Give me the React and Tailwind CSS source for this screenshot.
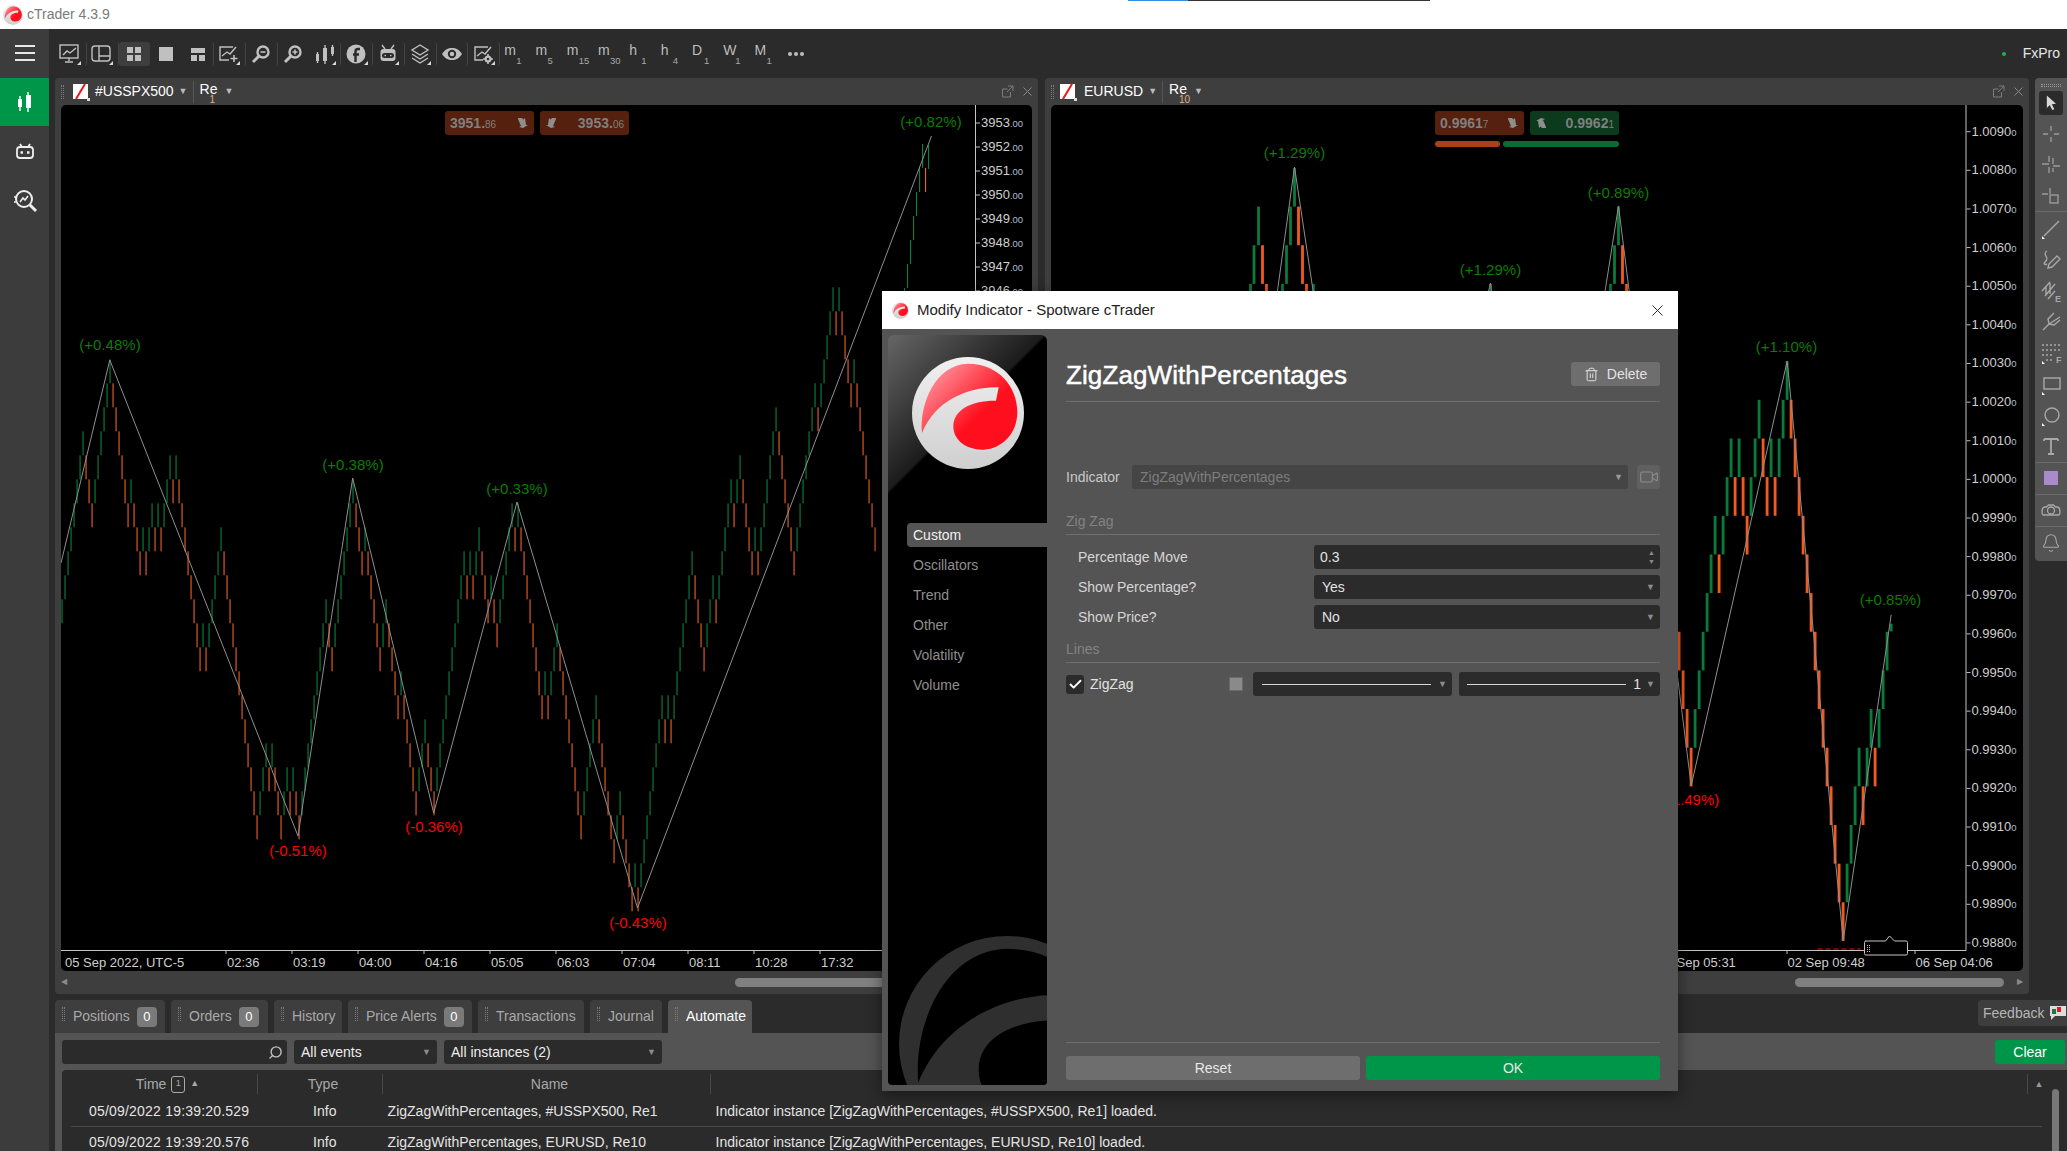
import React from "react";
import { Bell, Check, Search, Trash2, Video, X } from "lucide-react";

const GREEN = "#0d8040";
const ORANGE = "#ee6129";

// turns a string of renko moves (u/d) into bars
const walk = (startLevel, moves, firstUp) => {
  let level = startLevel;
  const bars = [{ i: 0, level, up: firstUp }];
  moves.split("").forEach((m, idx) => {
    level += m === "u" ? -1 : 1;
    bars.push({ i: idx + 1, level, up: m === "u" });
  });
  return bars;
};

const leftMoves = [
  "uuuuuuu", "ddd", "uuuuuu", "dddddd", "u", "ddd", "u", "d", "uu", "d", "u", "d", "uuu", "d", "u",
  "dddddddd", "u", "d", "uuuuu", "dddddddddddd", "uuu", "d", "u", "ddd", "uu", "d", "u", "dd",
  "uuuuuuuuu", "dd", "uu", "uuuuu", "ddd", "u", "ddddd", "uu", "dddd", "u", "ddddd", "uuu", "ddd",
  "uuuuuuuuuu", "d", "u", "d", "uu", "ddd", "u", "dd", "uuuuu", "d", "u", "dddddddd", "u", "d", "uuu",
  "dddddddd", "uuu", "uu", "dddddd", "uu", "dddd", "u", "d", "uuuuuuuu", "d", "u", "d", "uuuuuuu",
  "dddd", "uuu", "d", "uuuuu", "d", "uu", "dddd", "u", "d", "uuuuuu", "dddddd", "uuuuuuu", "d",
  "uuuuu", "d", "u", "dddd", "u", "ddddddd",
].join("");
const leftBars = walk(10, leftMoves, true);
const leftTip = [
  [904, 288, 1], [907, 264, 1], [910, 240, 1], [913, 216, 1], [916, 192, 1], [919, 168, 1],
  [922, 144, 1], [925, 168, 0], [928, 145, 1],
];

const rightMoves = "ddduuuuuuduuududduuuddudu" + "uu" + "dddddddddddddd" + "uuuuduuduuu";
const rightBars = walk(7, rightMoves, false);
const rightTop = [
  [1250, -2, 1], [1253.5, -3, 1], [1258, -4, 1], [1262, -3, 0], [1266, -2, 0], [1282, -2, 1], [1286, -3, 1],
  [1290, -4, 1], [1294, -5, 1], [1298, -4, 0], [1302, -3, 0], [1306, -2, 0], [1313, -2, 1], [1490, -2, 1],
  [1610, -2, 1], [1614, -3, 1], [1618, -4, 1], [1622, -3, 0], [1626, -2, 0],
];
const renkoY = (n) => 361.2 + 38.65 * n;

const Logo = ({ size, rim = "url(#logoRim)", core = "url(#logoRed)" }) => (
  <svg width={size} height={size} viewBox="0 0 336 336" className="shrink-0">
    <circle cx="168" cy="168" r="168" fill={rim} />
    <path
      d="M30 228C22 140 70 22 168 20C260 20 316 90 316 165C316 230 270 275 215 278C165 280 122 250 124 205C126 160 175 130 252 131L260 91C170 88 70 130 30 228Z"
      fill={core}
    />
  </svg>
);

const LogoDefs = () => (
  <svg width="0" height="0" className="absolute">
    <defs>
      <linearGradient id="logoRim" x1="0" y1="0" x2="0" y2="1">
        <stop offset="0" stopColor="#f0f0f0" />
        <stop offset="1" stopColor="#cfcfcf" />
      </linearGradient>
      <linearGradient id="logoRed" x1="0.1" y1="0.05" x2="0.65" y2="0.55">
        <stop offset="0" stopColor="#ff9aa2" />
        <stop offset="1" stopColor="#ff0f1e" />
      </linearGradient>
    </defs>
  </svg>
);

const Caret = ({ className = "text-[#bbbbbb]" }) => <span className={`text-[9px] leading-none ${className}`}>▼</span>;

const Corner = () => <path d="M23 23h-4l4-4z" fill="#d8d8d8" stroke="none" />;

const I = ({ children, size = 24, color = "#c0c0c0" }) => (
  <svg width={size} height={size} viewBox="0 0 24 24" fill="none" stroke={color} strokeWidth="1.4" className="shrink-0">
    {children}
  </svg>
);

const toolbarIcons = [
  <I key="1">
    <rect x="2" y="3" width="18" height="13" />
    <path d="M5 13l4-4 3 2 6-5M11 16v3M7 20h8" />
    <Corner />
  </I>,
  <I key="2">
    <rect x="2" y="4" width="18" height="15" rx="3" />
    <path d="M9 4v15M9 14h11" />
    <Corner />
  </I>,
  <I key="3">
    <path d="M5 5h6v6H5zM13 5h6v6h-6zM5 13h6v6H5zM13 13h6v6h-6z" fill="#c0c0c0" stroke="none" />
  </I>,
  <I key="4">
    <rect x="5" y="5" width="14" height="14" fill="#c0c0c0" stroke="none" />
  </I>,
  <I key="5">
    <path d="M5 6h14v5H5zM5 13h6v6H5zM13 13h6v6h-6z" fill="#c0c0c0" stroke="none" />
  </I>,
  <I key="6">
    <path d="M16 5H3v13h9M5 14l5-4 3 2 6-7" />
    <path d="M17 13v7M13.500 16.500h7" strokeWidth="1.600" />
    <Corner />
  </I>,
  <I key="7">
    <circle cx="14" cy="10" r="5.500" strokeWidth="2.400" />
    <path d="M10 14l-6 6" strokeWidth="3" />
    <path d="M11.500 10h5" strokeWidth="1.600" />
  </I>,
  <I key="8">
    <circle cx="14" cy="10" r="5.500" strokeWidth="2.400" />
    <path d="M10 14l-6 6" strokeWidth="3" />
    <path d="M11.500 10h5M14 7.500v5" strokeWidth="1.600" />
  </I>,
  <I key="9">
    <path d="M3 12h3v7H3zM10 6h4v13h-4zM18 5h3v7h-3z" fill="#c0c0c0" stroke="none" />
    <path d="M4.500 10v11M12 3v19M19.500 3v11" />
    <Corner />
  </I>,
  <I key="10">
    <circle cx="11" cy="12" r="9.500" fill="#c0c0c0" stroke="none" />
    <path d="M15 7h-2c-1.500 0-2.500 1-2.500 2.500V20M8 12.500h6" stroke="#2b2b2b" strokeWidth="2.400" />
    <Corner />
  </I>,
  <I key="11">
    <path d="M6 3l3 4M18 3l-3 4" />
    <rect x="3.500" y="7" width="15" height="12" rx="3" transform="translate(1)" fill="#c0c0c0" stroke="none" />
    <rect x="6" y="11" width="12" height="5" rx="2.500" fill="#2b2b2b" stroke="none" />
    <path d="M8.500 13.500h1.500M14 13.500h1.500" stroke="#c0c0c0" />
    <Corner />
  </I>,
  <I key="12">
    <path d="M12 3l8 5-8 5-8-5zM4 12l8 5 8-5M4 16l8 5 8-5" />
    <Corner />
  </I>,
  <I key="13">
    <path d="M2 12c3-4.500 6-6 10-6s7 1.500 10 6c-3 4.500-6 6-10 6s-7-1.500-10-6z" fill="#c0c0c0" stroke="none" />
    <circle cx="12" cy="12" r="3.200" stroke="#2b2b2b" strokeWidth="2" />
  </I>,
  <I key="14">
    <path d="M16 5H3v13h8M5 14l5-4 3 2 6-7" />
    <circle cx="16" cy="17" r="3.500" fill="#c0c0c0" stroke="none" />
    <circle cx="16" cy="17" r="1.300" fill="#2b2b2b" stroke="none" />
    <path d="M16 12v2M16 20v2M11 17h2M19 17h2" strokeWidth="1.600" />
    <Corner />
  </I>,
];

const timeframes = [
  ["m", "1"], ["m", "5"], ["m", "15"], ["m", "30"], ["h", "1"], ["h", "4"], ["D", "1"], ["W", "1"], ["M", "1"],
];

const drawTools = [
  <I key="a" color="#dddddd">
    <path d="M7 3l11 10-5 .5 3 6-2.500 1-3-6L7 18z" fill="#d8d8d8" stroke="none" />
  </I>,
  <I key="b" color="#9a9a9a">
    <path d="M12 4v5M12 15v5M4 12h5M15 12h5" />
  </I>,
  <I key="c" color="#9a9a9a">
    <path d="M10 3v6M14 5v6M3 11h7M14 13h7M10 14v6M14 15v4" />
  </I>,
  <I key="d" color="#9a9a9a">
    <path d="M11 4v6M3 10h6" />
    <rect x="11" y="11" width="8" height="8" />
  </I>,
  <I key="e" color="#a8a8a8">
    <path d="M20 4L5 19" />
    <path d="M3 22v-3l3 3z" fill="#fff" stroke="none" />
  </I>,
  <I key="f" color="#a8a8a8">
    <path d="M8 3C2 7 12 9 6 14c-2 2 0 3 2 2M9 20l1-4 8-8 3 3-8 8z" />
  </I>,
  <I key="g" color="#a8a8a8">
    <path d="M3 12l8-9M6 17l10-12M9 20l7-8M7 7v9M11 4v11" />
    <text x="16" y="23" fontSize="9" fontWeight="700" fill="#a8a8a8" stroke="none">E</text>
  </I>,
  <I key="h" color="#a8a8a8">
    <path d="M4 20l6-6M10 14l11-7M10 14l5 1 6-5M10 14l-1-5 6-6" />
  </I>,
  <I key="i" color="#a8a8a8">
    <path d="M3 4h18M3 9h18M3 14h12M7 19h8" strokeDasharray="2 2" />
    <path d="M3 23v-3l3 3z" fill="#fff" stroke="none" />
    <text x="17" y="22" fontSize="9" fontWeight="700" fill="#a8a8a8" stroke="none">F</text>
  </I>,
  <I key="j" color="#a8a8a8">
    <rect x="5" y="6" width="16" height="11" />
    <path d="M3 23v-3l3 3z" fill="#fff" stroke="none" />
  </I>,
  <I key="k" color="#a8a8a8">
    <circle cx="13" cy="12" r="7" />
    <path d="M3 23v-3l3 3z" fill="#fff" stroke="none" />
  </I>,
  <I key="l" color="#a8a8a8">
    <path d="M5 5h14M12 5v15M9 20h6M5 5v2M19 5v2" strokeWidth="1.800" />
  </I>,
];

const tabs = [
  { label: "Positions", badge: "0", w: "w-[110px]" },
  { label: "Orders", badge: "0", w: "w-[97px]" },
  { label: "History", w: "w-[68px]" },
  { label: "Price Alerts", badge: "0", w: "w-[124px]" },
  { label: "Transactions", w: "w-[106px]" },
  { label: "Journal", w: "w-[72px]" },
  { label: "Automate", w: "w-[84px]", active: true },
];

const Grip = ({ className = "" }) => (
  <span className={`w-[3px] h-[14px] shrink-0 border-x border-dotted border-[#7a7a7a] ${className}`} />
);

const PriceChip = ({ className, children }) => (
  <div className={`h-[24px] w-[89px] rounded-[3px] flex items-center justify-between px-[5px] text-[#7f7f7f] font-bold text-[14px] ${className}`}>
    {children}
  </div>
);

const ChipArrow = ({ flip, up }) => (
  <svg width="12" height="12" viewBox="0 0 12 12" className={`${flip ? "-scale-x-100" : ""} ${up ? "-scale-y-100" : ""}`}>
    <path d="M1 1h4l1.500 1.500 1.500-1.500 1 7 2 0-5 3-4-1 2-1-3-7z" fill="#8e8e8e" />
  </svg>
);

const PanelHeader = ({ symbol, period, leftPad, gap }) => (
  <div className="h-[27px] shrink-0 flex items-center">
    <Grip />
    <div className={`relative h-[15px] w-[15px] bg-white ${leftPad}`}>
      <svg viewBox="0 0 15 15" className="w-full h-full">
        <path d="M3 15L12 0" stroke="#e8161e" strokeWidth="2" />
      </svg>
      <span className="absolute -right-[2px] -bottom-[2px] w-[3px] h-[3px] bg-[#dddddd]" />
    </div>
    <span className={`text-[14px] text-white ${gap}`}>{symbol}</span>
    <Caret className="text-[#bbbbbb] ml-[5px]" />
    <span className="ml-[5px] h-[22px] border-l border-[#555555]" />
    <span className="ml-[6px] text-[14px] text-white -mt-[4px] relative">
      Re
      <span className="absolute left-[10px] top-[13px] text-[10px] text-[#e0b080]">{period}</span>
    </span>
    <Caret className="text-[#bbbbbb] ml-[7px]" />
    <div className="ml-auto flex items-center gap-[6px] -mr-[3px]">
      <svg width="13" height="13" viewBox="0 0 13 13" fill="none" stroke="#7c7c7c">
        <path d="M9.500 7v5h-8V4h5M7 1h5v5M12 1L6 7" />
      </svg>
      <X size={15} color="#888888" strokeWidth={1.6} />
    </div>
  </div>
);

const PriceTick = ({ x, y, main, small }) => (
  <>
    <line x1={x} x2={x + 4} y1={y} y2={y} stroke="#bdbdbd" />
    <text x={x + 5} y={y + 4} fontSize="13" fill="#cfcfcf">
      {main}
      <tspan fontSize="9.500" fill="#a9bdd4">{small}</tspan>
    </text>
  </>
);

const Pct = ({ x, y, children, red }) => (
  <text x={x} y={y + 5} textAnchor="middle" fontSize="15" fill={red ? "#ff0000" : "#0a7d00"}>
    {children}
  </text>
);

const leftTimes = ["02:36", "03:19", "04:00", "04:16", "05:05", "06:03", "07:04", "08:11", "10:28", "17:32"];

const LeftChart = () => (
  <svg viewBox="61 105 971 866" className="block w-full h-full">
    {leftBars.map((b) => (
      <rect
        key={b.i}
        x={61.5 + 3 * b.i}
        y={359.3 + 24 * b.level}
        width="1.100"
        height="24"
        fill={b.up ? GREEN : ORANGE}
      />
    ))}
    {leftTip.map(([x, y, up]) => (
      <rect key={x} x={x} y={y} width="1.100" height="24" fill={up ? GREEN : ORANGE} />
    ))}
    <polyline
      points="61,563 109.800,360 298,836 352.700,478 433.700,813 517,502 637.500,908 931.500,136"
      fill="none"
      stroke="#8f8f8f"
    />
    <Pct x={110} y={345}>(+0.48%)</Pct>
    <Pct x={353} y={465}>(+0.38%)</Pct>
    <Pct x={517} y={489}>(+0.33%)</Pct>
    <Pct x={931} y={122}>(+0.82%)</Pct>
    <Pct x={298} y={851} red>(-0.51%)</Pct>
    <Pct x={434} y={827} red>(-0.36%)</Pct>
    <Pct x={638} y={923} red>(-0.43%)</Pct>
    <path d="M975.500 105V950.500H61" fill="none" stroke="#c4c4c4" />
    {[3953, 3952, 3951, 3950, 3949, 3948, 3947, 3946].map((v, i) => (
      <PriceTick key={v} x={976} y={123 + i * 24} main={v} small=".00" />
    ))}
    <text x={65} y={967} fontSize="13" fill="#cfcfcf">05 Sep 2022, UTC-5</text>
    {leftTimes.map((t, i) => (
      <g key={t}>
        <line x1={226 + i * 66} x2={226 + i * 66} y1={950} y2={954} stroke="#bdbdbd" />
        <text x={227 + i * 66} y={967} fontSize="13" fill="#cfcfcf">{t}</text>
      </g>
    ))}
  </svg>
);

const rightPrices = Array.from({ length: 22 }, (_, i) => (1.009 - i * 0.001).toFixed(4));

const RightChart = () => (
  <svg viewBox="1051 105 971 866" className="block w-full h-full">
    {rightBars.map((b) => (
      <rect
        key={b.i}
        x={1677.2 + 4 * b.i}
        y={renkoY(b.level)}
        width="2.800"
        height="38.650"
        fill={b.up ? "#0b7a3a" : "#f4591f"}
      />
    ))}
    <rect x="1889.300" y="623.700" width="2.800" height="7.700" fill="#0b7a3a" />
    {rightTop.map(([x, n, up]) => (
      <rect key={x} x={x - 1.4} y={renkoY(n)} width="2.800" height="38.650" fill={up ? "#0b7a3a" : "#f4591f"} />
    ))}
    <polyline
      points="1240,560 1294,167 1380,740 1490,283 1540,700 1618,206 1690.700,785.700 1786.700,361 1842.700,940.600 1890.700,614.700"
      fill="none"
      stroke="#8f8f8f"
    />
    <Pct x={1294} y={153}>(+1.29%)</Pct>
    <Pct x={1618} y={193}>(+0.89%)</Pct>
    <Pct x={1490} y={270}>(+1.29%)</Pct>
    <Pct x={1786} y={347}>(+1.10%)</Pct>
    <Pct x={1890} y={600}>(+0.85%)</Pct>
    <Pct x={1690} y={800} red>(-1.49%)</Pct>
    <line x1="1817" x2="1860" y1="949" y2="949" stroke="#ff0000" strokeDasharray="5 3" />
    <path d="M1965.500 105V950.500H1051" fill="none" stroke="#c4c4c4" />
    {rightPrices.map((v, i) => (
      <PriceTick key={v} x={1966} y={131.700 + i * 38.630} main={v} small="0" />
    ))}
    <line x1="1786.500" x2="1786.500" y1="950" y2="954" stroke="#bdbdbd" />
    <line x1="1914.500" x2="1914.500" y1="950" y2="954" stroke="#bdbdbd" />
    <text x={1658} y={967} fontSize="13" fill="#cfcfcf">01 Sep 05:31</text>
    <text x={1787} y={967} fontSize="13" fill="#cfcfcf">02 Sep 09:48</text>
    <text x={1915} y={967} fontSize="13" fill="#cfcfcf">06 Sep 04:06</text>
    <path
      d="M1865 941h20l4-5 5 5h11.500a1.500 1.500 0 0 1 1.500 1.500v11a1.500 1.500 0 0 1-1.500 1.500h-40a1.500 1.500 0 0 1-1.500-1.500v-11a1.500 1.500 0 0 1 1.500-1.500z"
      fill="#000"
      stroke="#c4c4c4"
    />
    <path d="M1867 945v7M1869 945v7" stroke="#c4c4c4" strokeDasharray="1 1" />
  </svg>
);

const DialogRow = ({ label, children }) => (
  <div className="flex items-center h-[24px] pl-[12px]">
    <span className="w-[236px] shrink-0 text-[14px] text-[#d6d6d6]">{label}</span>
    {children}
  </div>
);

const DarkSelect = ({ value, pl = "pl-[8px]" }) => (
  <div className={`flex-1 h-full bg-[#2b2b2b] rounded-[3px] flex items-center justify-between pr-[5px] ${pl} text-[14px] text-[#e2e2e2]`}>
    {value}
    <Caret className="text-[#8c8c8c]" />
  </div>
);

const SectionTitle = ({ className, children }) => (
  <div className={`flex items-end pb-[2px] border-b border-[#6e6e6e] text-[14px] text-[#838383] ${className}`}>
    {children}
  </div>
);

const Dialog = () => (
  <div className="absolute left-[882px] top-[291px] w-[796px] h-[800px] flex flex-col bg-[#545454] shadow-[0_4px_14px_rgba(0,0,0,0.45)]">
    <div className="h-[38px] shrink-0 bg-white flex items-center pl-[10px] pr-[11px] text-[15px] text-[#222222]">
      <Logo size={17} />
      <span className="ml-[8px] pt-[1px]">Modify Indicator - Spotware cTrader</span>
      <X size={19} strokeWidth={1.200} color="#222222" className="ml-auto" />
    </div>
    <div className="flex-1 flex pt-[6px] pb-[6px] pl-[6px]">
      <div className="relative w-[159px] overflow-hidden rounded-t-[6px] rounded-b-[4px] bg-[linear-gradient(135deg,#666666_0,#1c1c1c_110px,#000000_113px)] flex flex-col">
        <div className="mt-[22px] ml-[24px]">
          <Logo size={112} />
        </div>
        <div className="mt-[54px] ml-[19px] flex flex-col gap-[6px] text-[14px] text-[#8f8f8f]">
          <div className="h-[24px] pl-[6px] flex items-center bg-[#545454] rounded-l-[4px] text-[#f0f0f0]">Custom</div>
          {["Oscillators", "Trend", "Other", "Volatility", "Volume"].map((n) => (
            <div key={n} className="h-[24px] pl-[6px] flex items-center">{n}</div>
          ))}
        </div>
        <div className="absolute left-[11px] top-[601px]">
          <Logo size={216} rim="#2f2f2f" core="#000000" />
        </div>
      </div>
      <div className="ml-[19px] w-[594px] pb-[5px] flex flex-col">
        <div className="h-[67px] shrink-0 flex items-end justify-between pb-[15px] border-b border-[#6e6e6e]">
          <span className="text-[26px] leading-[32px] text-white tracking-[0.100px] -mb-[5px] [-webkit-text-stroke:0.500px_white]">ZigZagWithPercentages</span>
          <div className="h-[24px] w-[89px] rounded-[3px] bg-[#6e6e6e] flex items-center justify-center gap-[8px] text-[14px] text-[#e2e2e2]">
            <Trash2 size={15} strokeWidth={1.600} />
            <span className="pt-[1px]">Delete</span>
          </div>
        </div>
        <div className="mt-[63px] h-[24px] flex items-center">
          <span className="w-[66px] text-[14px] text-[#c8c8c8]">Indicator</span>
          <div className="w-[496px] h-full bg-[#454545] rounded-[3px] flex items-center justify-between pl-[8px] pr-[5px] text-[14px] text-[#7e7e7e]">
            ZigZagWithPercentages
            <Caret className="text-[#9a9a9a]" />
          </div>
          <div className="ml-[9px] w-[23px] h-full bg-[#606060] rounded-[3px] flex items-center justify-center">
            <Video size={20} strokeWidth={1.300} color="#8c8c8c" />
          </div>
        </div>
        <SectionTitle className="h-[46px]">Zig Zag</SectionTitle>
        <div className="mt-[10px] flex flex-col gap-[6px]">
          <DialogRow label="Percentage Move">
            <div className="flex-1 h-full bg-[#2b2b2b] rounded-[3px] flex items-center justify-between pl-[6px] pr-[5px] text-[14px] text-[#e2e2e2]">
              0.3
              <span className="flex flex-col gap-[1px] text-[#8c8c8c]">
                <span className="text-[7px] leading-[8px]">▲</span>
                <span className="text-[7px] leading-[8px]">▼</span>
              </span>
            </div>
          </DialogRow>
          <DialogRow label="Show Percentage?"><DarkSelect value="Yes" /></DialogRow>
          <DialogRow label="Show Price?"><DarkSelect value="No" /></DialogRow>
        </div>
        <SectionTitle className="h-[34px]">Lines</SectionTitle>
        <div className="mt-[9px] h-[24px] flex items-center">
          <div className="w-[18px] h-[19px] bg-[#2b2b2b] rounded-[3px] flex items-center justify-center">
            <Check size={15} strokeWidth={3} color="#ffffff" />
          </div>
          <span className="ml-[6px] w-[139px] text-[14px] text-[#e2e2e2]">ZigZag</span>
          <span className="w-[14px] h-[14px] bg-[#8a8a8a] border border-[#6a6a6a]" />
          <div className="ml-[10px] w-[199px] h-full bg-[#2b2b2b] rounded-[3px] flex items-center pl-[9px] pr-[5px]">
            <span className="flex-1 border-t border-[#d8d8d8]" />
            <Caret className="ml-[7px] text-[#8c8c8c]" />
          </div>
          <div className="ml-[7px] w-[201px] h-full bg-[#2b2b2b] rounded-[3px] flex items-center pl-[8px] pr-[5px] text-[14px] text-[#e2e2e2]">
            <span className="flex-1 border-t border-[#d8d8d8]" />
            <span className="ml-[7px]">1</span>
            <Caret className="ml-[5px] text-[#8c8c8c]" />
          </div>
        </div>
        <div className="mt-auto border-t border-[#6e6e6e] pt-[13px] flex gap-[6px] text-[14px] text-[#e8e8e8]">
          <div className="w-[294px] h-[24px] rounded-[3px] bg-[#6e6e6e] flex items-center justify-center">Reset</div>
          <div className="w-[294px] h-[24px] rounded-[3px] bg-[#00964a] flex items-center justify-center">OK</div>
        </div>
      </div>
    </div>
  </div>
);

const App = () => (
  <div className="relative w-[2067px] h-[1151px] overflow-hidden flex flex-col bg-[#2b2b2b] [font-family:'Liberation_Sans',Arial,sans-serif]">
    <LogoDefs />
    {/* window title */}
    <div className="relative h-[29px] shrink-0 bg-white flex items-center pl-[3px] text-[14px] text-[#7a7a7a]">
      <Logo size={20} />
      <span className="ml-[4px]">cTrader 4.3.9</span>
      <span className="absolute left-[1128px] top-0 w-[60px] h-[1px] bg-[#2f8fe8]" />
      <span className="absolute left-[1188px] top-0 w-[242px] h-[1px] bg-[#333333]" />
    </div>

    <div className="flex-1 flex min-h-0">
      {/* left rail */}
      <div className="w-[49px] shrink-0 bg-[#3c3c3c] flex flex-col items-center">
        <div className="h-[49px] pb-[2px] w-full flex items-center justify-center">
          <svg width="22" height="18" viewBox="0 0 22 18" stroke="#e6e6e6" strokeWidth="2">
            <path d="M1 2h20M1 9h20M1 16h20" />
          </svg>
        </div>
        <div className="h-[48px] w-full bg-[#00964a] flex items-center justify-center">
          <svg width="24" height="24" viewBox="0 0 24 24" stroke="#ffffff" fill="#ffffff">
            <path d="M7 6v15M15 2v20" strokeWidth="1.400" />
            <rect x="5" y="9" width="4" height="8" stroke="none" />
            <rect x="13" y="5" width="5" height="13" stroke="none" />
          </svg>
        </div>
        <div className="mt-[13px] h-[24px]">
          <svg width="24" height="24" viewBox="0 0 24 24" fill="none" stroke="#eeeeee" strokeWidth="1.800">
            <path d="M7 5l2 3M17 5l-2 3" />
            <rect x="4" y="8" width="16" height="11" rx="3" />
            <path d="M7.500 13.500h2.500M14 13.500h2.500" strokeWidth="2.400" />
          </svg>
        </div>
        <div className="mt-[25px] h-[24px]">
          <svg width="26" height="26" viewBox="0 0 26 26" fill="none" stroke="#eeeeee" strokeWidth="2">
            <circle cx="12" cy="11" r="8" />
            <path d="M18 17l6 6" strokeWidth="3" />
            <path d="M8 14l3-4 2 2 3-4M2 9h3M2 14h2" strokeWidth="1.500" />
          </svg>
        </div>
      </div>

      <div className="flex-1 min-w-0 flex flex-col">
        {/* top toolbar */}
        <div className="h-[49px] shrink-0 flex items-center pl-[6px] pr-[7px]">
          {toolbarIcons.map((icon, i) => (
            <div
              key={i}
              className={`w-[31.800px] h-[24px] flex items-center justify-center rounded-[3px] ${i === 2 ? "bg-[#3e3e3e]" : ""} ${[0, 1, 4, 5, 6, 8, 9, 10, 11, 12, 13].includes(i) ? "border-r border-[#444444]" : ""}`}
            >
              {icon}
            </div>
          ))}
          <div className="flex ml-[4px]">
            {timeframes.map(([l, s], i) => (
              <div key={i} className="relative w-[31.300px] h-[24px] text-[14px] text-[#bdbdbd]">
                <span className="absolute left-0 -top-[2px]">{l}</span>
                <span className="absolute left-[12px] top-[12px] text-[9.500px] text-[#a8a8a8]">{s}</span>
              </div>
            ))}
          </div>
          <svg width="18" height="6" viewBox="0 0 18 6" className="ml-[1px]" fill="#bdbdbd">
            <circle cx="3" cy="3" r="2" />
            <circle cx="9" cy="3" r="2" />
            <circle cx="15" cy="3" r="2" />
          </svg>
          <span className="ml-auto w-[4px] h-[4px] rounded-full bg-[#19b45c]" />
          <span className="ml-[17px] text-[14px] text-[#e6e6e6]">FxPro</span>
        </div>

        {/* charts */}
        <div className="h-[916px] shrink-0 flex pl-[6px]">
          <div className="w-[983px] shrink-0 bg-[#3e3e3e] rounded-[4px] px-[6px] flex flex-col">
            <PanelHeader symbol="#USSPX500" period="1" leftPad="ml-[9px]" gap="ml-[7px]" />
            <div className="relative h-[866px] shrink-0 bg-black rounded-[5px] overflow-hidden">
              <LeftChart />
              <div className="absolute left-[384px] top-[6px] flex gap-[6px]">
                <PriceChip className="bg-[#55200e]">
                  <span>3951.<small className="text-[10px] font-normal">86</small></span>
                  <ChipArrow />
                </PriceChip>
                <PriceChip className="bg-[#55200e]">
                  <ChipArrow flip />
                  <span>3953.<small className="text-[10px] font-normal">06</small></span>
                </PriceChip>
              </div>
            </div>
            <div className="h-[22px] flex items-center">
              <span className="text-[8px] leading-none text-[#8a8a8a]">◀</span>
              <span className="ml-[668px] w-[260px] h-[9px] rounded-full bg-[#808080]" />
            </div>
          </div>

          <div className="ml-[7px] w-[984px] shrink-0 bg-[#3e3e3e] rounded-[4px] px-[6px] flex flex-col">
            <PanelHeader symbol="EURUSD" period="10" leftPad="ml-[6px]" gap="ml-[9px]" />
            <div className="relative h-[866px] shrink-0 bg-black rounded-[5px] overflow-hidden">
              <RightChart />
              <div className="absolute left-[384px] top-[6px] flex gap-[6px]">
                <PriceChip className="bg-[#55200e]">
                  <span>0.9961<small className="text-[10px] font-normal">7</small></span>
                  <ChipArrow />
                </PriceChip>
                <PriceChip className="bg-[#0b3a1d]">
                  <ChipArrow flip up />
                  <span>0.9962<small className="text-[10px] font-normal">1</small></span>
                </PriceChip>
              </div>
              <div className="absolute left-[384px] top-[36px] flex gap-[3px]">
                <span className="w-[65px] h-[6px] rounded-full bg-[#a8401c]" />
                <span className="w-[116px] h-[6px] rounded-full bg-[#0c6b34]" />
              </div>
            </div>
            <div className="h-[22px] flex items-center justify-end">
              <span className="w-[209px] h-[9px] rounded-full bg-[#808080]" />
              <span className="ml-[13px] text-[8px] leading-none text-[#8a8a8a]">▶</span>
            </div>
          </div>

          {/* drawing tools */}
          <div className="ml-[6px] w-[32px] h-[483px] shrink-0 bg-[#545454] rounded-tl-[4px] rounded-bl-[4px] flex flex-col items-center">
            <span className="mt-[6px] w-[20px] h-[3px] border-y border-dotted border-[#9a9a9a]" />
            <div className="mt-[4px] w-[24px] h-[24px] bg-[#2b2b2b] rounded-[3px] flex items-center justify-center">
              <I size={20}>{drawTools[0].props.children}</I>
            </div>
            {drawTools.slice(1).map((tool, i) => (
              <div key={i} className={`w-full flex justify-center ${i === 3 ? "mt-[3px] pt-[5px] border-t border-[#6a6a6a]" : "mt-[7px]"}`}>
                {tool}
              </div>
            ))}
            <div className="mt-[4px] pt-[8px] w-full flex justify-center border-t border-[#6a6a6a]">
              <span className="w-[14px] h-[14px] bg-[#a98bc9]" />
            </div>
            <div className="mt-[9px] pt-[4px] w-full flex justify-center border-t border-[#6a6a6a]">
              <svg width="22" height="22" viewBox="0 0 22 22" fill="none" stroke="#a8a8a8" strokeWidth="1.300">
                <path d="M2 13c0-3 1-5 3-5h1.500l2-2h5l2 2H17c2 0 3 2 3 5s-1 3-3 3H5c-2 0-3 0-3-3z" />
                <circle cx="11" cy="11.500" r="3.500" />
              </svg>
            </div>
            <div className="mt-[5px] pt-[6px] w-full flex justify-center border-t border-[#6a6a6a]">
              <Bell size={20} strokeWidth={1.300} color="#a8a8a8" />
            </div>
          </div>
        </div>

        {/* bottom tabs */}
        <div className="mt-[6px] h-[33px] shrink-0 flex gap-[6px] pl-[6px]">
          {tabs.map((t) => (
            <div
              key={t.label}
              className={`${t.w} h-full rounded-t-[4px] flex items-center pl-[7px] gap-[8px] text-[14px] ${t.active ? "bg-[#545454] text-white" : "bg-[#3e3e3e] text-[#a9a9a9]"}`}
            >
              <Grip className="-mt-[6px]" />
              {t.label}
              {t.badge && (
                <span className="-ml-[1px] w-[20px] h-[20px] rounded-[4px] bg-[#7a7a7a] flex items-center justify-center text-[13px] text-white">
                  {t.badge}
                </span>
              )}
            </div>
          ))}
          <div className="ml-auto w-[89px] h-[26px] bg-[#3e3e3e] rounded-l-[4px] flex items-center pl-[5px] gap-[5px] text-[14px] text-[#b5b5b5]">
            Feedback
            <svg width="18" height="18" viewBox="0 0 18 18" className="shrink-0">
              <path d="M1 2h16v10H6l-4 4V12H1z" fill="#dddddd" />
              <rect x="8" y="3" width="4" height="5" fill="#e8161e" />
              <rect x="3" y="5" width="4" height="5" fill="#0d8040" />
            </svg>
          </div>
        </div>

        <div className="flex-1 min-h-0 ml-[6px] flex flex-col bg-[#545454]">
          <div className="h-[37px] shrink-0 flex items-center pt-[1px] pl-[7px] pr-[2px] text-[14px] text-[#ededed]">
            <div className="w-[225px] h-[24px] bg-[#2b2b2b] rounded-[3px] flex items-center justify-end pr-[4px]">
              <Search size={15} strokeWidth={2.200} color="#c0c0c0" className="-scale-x-100" />
            </div>
            <div className="ml-[7px] w-[143px] h-[24px] bg-[#2b2b2b] rounded-[3px] flex items-center justify-between pl-[7px] pr-[6px]">
              All events
              <Caret className="text-[#8c8c8c]" />
            </div>
            <div className="ml-[7px] w-[218px] h-[24px] bg-[#2b2b2b] rounded-[3px] flex items-center justify-between pl-[7px] pr-[6px]">
              All instances (2)
              <Caret className="text-[#8c8c8c]" />
            </div>
            <div className="ml-auto w-[70px] h-[24px] bg-[#00964a] rounded-[3px] flex items-center justify-center text-white">
              Clear
            </div>
          </div>
          <div className="flex-1 min-h-0 ml-[7px] bg-[#2b2b2b] rounded-tl-[4px] overflow-hidden relative">
            <div className="h-[24px] flex items-end text-[14px] text-[#a9a9a9]">
              <div className="w-[196px] h-[20px] border-r border-[#484848] flex items-center justify-center gap-[5px] pl-[16px]">
                Time
                <span className="w-[14px] h-[17px] border border-[#a9a9a9] rounded-[3px] flex items-center justify-center text-[9px]">1</span>
                <span className="text-[9px]">▲</span>
              </div>
              <div className="w-[125px] h-[20px] pl-[6px] border-r border-[#484848] flex items-center justify-center">Type</div>
              <div className="w-[328px] h-[20px] pl-[6px] border-r border-[#484848] flex items-center justify-center">Name</div>
              <div className="ml-auto mr-[17px] h-[20px] border-l border-[#484848] w-[23px] flex items-center justify-center text-[9px] pt-[1px] text-[#9a9a9a]">▲</div>
            </div>
            <span className="absolute right-[8px] top-[19px] w-[7px] h-[70px] rounded-full bg-[#777777]" />
            {[
              ["05/09/2022 19:39:20.529", "ZigZagWithPercentages, #USSPX500, Re1", "Indicator instance [ZigZagWithPercentages, #USSPX500, Re1] loaded."],
              ["05/09/2022 19:39:20.576", "ZigZagWithPercentages, EURUSD, Re10", "Indicator instance [ZigZagWithPercentages, EURUSD, Re10] loaded."],
            ].map(([time, name, msg], i) => (
              <div key={time} className={`h-[30px] ml-[9px] mr-[25px] flex items-center text-[14px] text-[#e4e4e4] ${i === 0 ? "mt-[3px] border-b border-[#484848]" : ""}`}>
                <span className="w-[178px] pl-[18px] whitespace-nowrap tracking-[0.200px]">{time}</span>
                <span className="w-[138.600px] pl-[13px] text-center">Info</span>
                <span className="w-[328px] whitespace-nowrap">{name}</span>
                <span className="whitespace-nowrap">{msg}</span>
              </div>
            ))}
          </div>
        </div>
      </div>
    </div>

    <Dialog />
  </div>
);

export default App;
